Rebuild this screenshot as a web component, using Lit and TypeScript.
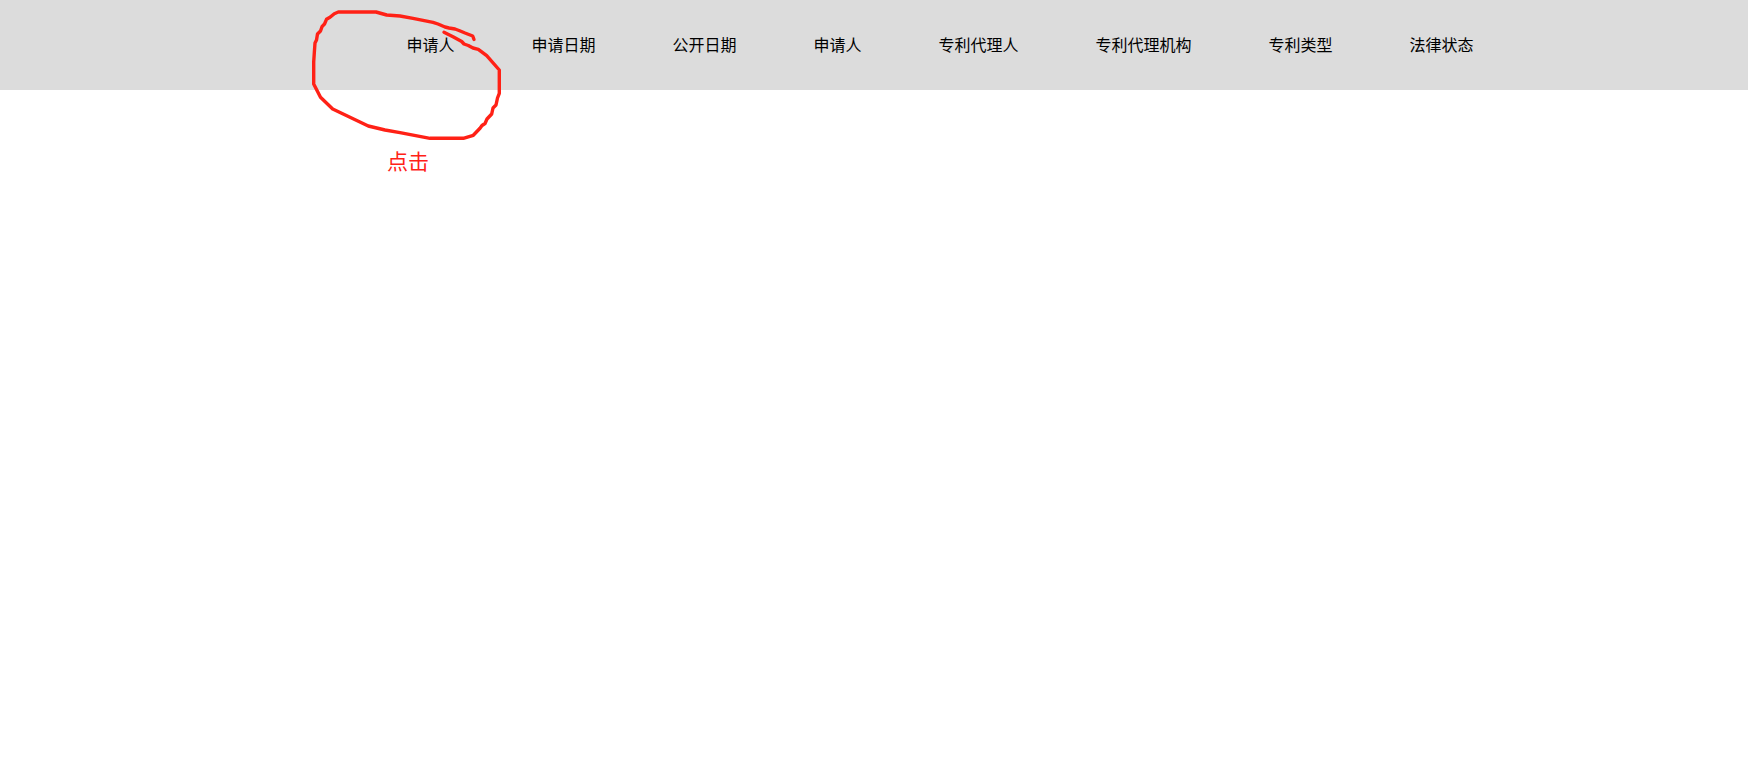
import { LitElement, html, css, svg } from "lit";
import { customElement } from "lit/decorators.js";

const ITEMS = ["申请人", "申请日期", "公开日期", "申请人", "专利代理人", "专利代理机构", "专利类型", "法律状态"];

const LOOP = [
  [474, 39.5], [472.7, 36], [465, 33], [459, 30.5], [455, 29], [449, 28], [445, 27], [438, 24], [433, 22.3], [413, 18.3], [400, 16], [386.7, 15],
  [376, 12], [338.3, 12], [334.3, 13.7], [330, 17.3], [326.5, 19.3], [324.5, 24], [322, 26.7], [320.5, 31], [317.5, 34], [316.5, 40], [315, 43],
  [314.5, 50], [313.7, 62], [313.7, 84], [320.5, 97.3], [332.7, 109], [368.3, 126], [385, 130], [400, 132.7],
  [430, 138.3], [463.3, 138.3], [473.3, 135.3], [480, 128.3], [482, 125.5], [485, 123.5], [487, 119], [491.7, 114], [493, 108], [496, 105], [497.5, 98],
  [499.3, 93.3], [499.3, 70], [486.7, 55.7], [478.3, 49.3], [473, 48], [468.3, 45.5], [464, 44], [461.7, 41.5], [453, 36.7], [444, 32.3],
];

@customElement("app-root")
export class AppRoot extends LitElement {
  static styles = css`
    :host {
      display: block;
      position: relative;
      min-height: 783px;
      background: #fff;
      font-family: "Noto Sans CJK SC", "Liberation Sans", sans-serif;
    }
    .nav {
      display: flex;
      height: 90px;
      margin: 0;
      padding: 0 0 0 368px;
      list-style: none;
      background: #dcdcdc;
    }
    .nav a {
      display: block;
      padding: 0 38.5px;
      font-size: 16px;
      line-height: 88px;
      color: #000;
      text-decoration: none;
      white-space: nowrap;
    }
    .scribble {
      position: absolute;
      left: 0;
      top: 0;
      pointer-events: none;
    }
    .scribble polyline {
      fill: none;
      stroke: #ff2116;
      stroke-width: 3.4;
      stroke-linejoin: round;
      stroke-linecap: round;
    }
    .note {
      position: absolute;
      left: 387px;
      top: 145px;
      font-size: 21px;
      line-height: 30px;
      color: #ff2116;
    }
  `;

  render() {
    return html`
      <ul class="nav">
        ${ITEMS.map((t) => html`<li><a href="#">${t}</a></li>`)}
      </ul>
      <svg class="scribble" width="1748" height="200" viewBox="0 0 1748 200" aria-hidden="true">
        ${svg`<polyline points=${LOOP.map((p) => p.join(",")).join(" ")}></polyline>`}
      </svg>
      <div class="note">点击</div>
    `;
  }
}
